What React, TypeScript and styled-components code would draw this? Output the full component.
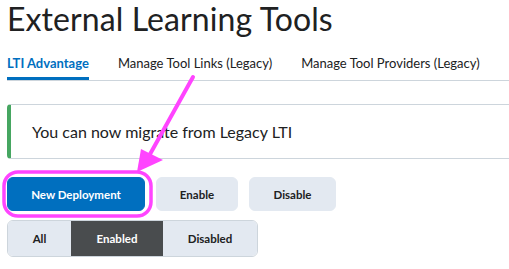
import React from 'react'
import styled, { createGlobalStyle } from 'styled-components'

const Global = createGlobalStyle`
  html, body { margin: 0; padding: 0; background: #ffffff; }
  body { font-family: Lato, "Open Sans", sans-serif; color: #202122; overflow: hidden; }
`

const Page = styled.div`
  position: relative;
  width: 509px;
  height: 269px;
  padding-left: 7px;
  box-sizing: border-box;
  overflow: hidden;
`

const Title = styled.h1`
  margin: 0;
  font-size: 32px;
  font-weight: 400;
  line-height: 38px;
  color: #202122;
  letter-spacing: 0.1px;
`

const TabBar = styled.div`
  display: flex;
  gap: 29px;
  margin-top: 10px;
  border-bottom: 1px solid #cdd5dc;
`

const Tab = styled.div<{ $active?: boolean }>`
  font-size: 13px;
  line-height: 16px;
  padding: 7px 0 9px;
  font-weight: ${p => (p.$active ? 700 : 400)};
  color: ${p => (p.$active ? '#006fbf' : '#202122')};
  box-shadow: ${p => (p.$active ? 'inset 0 -3px 0 #006fbf' : 'none')};
`

const Alert = styled.div`
  margin-top: 23px;
  height: 53px;
  display: flex;
  align-items: center;
  padding-left: 21px;
  border: 1px solid #cdd5dc;
  border-left: 4px solid #46a661;
  border-right: none;
  border-radius: 4px 0 0 4px;
  font-size: 16px;
  color: #202122;
`

const ButtonRow = styled.div`
  display: flex;
  gap: 11px;
  margin-top: 18px;
`

const Button = styled.button<{ $primary?: boolean; $w: number }>`
  width: ${p => p.$w}px;
  height: 34px;
  border-radius: 6px;
  border: 1px solid ${p => (p.$primary ? '#006fbf' : '#e3e9f1')};
  background: ${p => (p.$primary ? '#006fbf' : '#e3e9f1')};
  color: ${p => (p.$primary ? '#ffffff' : '#202122')};
  font-family: Lato, sans-serif;
  font-size: 11.5px;
  font-weight: 700;
  padding: 0;
`

const Segmented = styled.div`
  display: inline-flex;
  margin-top: 9px;
  border: 1px solid #cdd5dc;
  border-radius: 6px;
  overflow: hidden;
  height: 35px;
`

const Segment = styled.div<{ $selected?: boolean; $w: number }>`
  width: ${p => p.$w}px;
  display: flex;
  align-items: center;
  justify-content: center;
  font-size: 11.5px;
  font-weight: 700;
  background: ${p => (p.$selected ? '#494c4e' : '#e3e9f1')};
  color: ${p => (p.$selected ? '#ffffff' : '#202122')};
`

const Annotation = styled.svg`
  position: absolute;
  left: 0;
  top: 0;
  pointer-events: none;
`

export default function App() {
  return (
    <Page>
      <Global />
      <Title>External Learning Tools</Title>
      <TabBar>
        <Tab $active>LTI Advantage</Tab>
        <Tab>Manage Tool Links (Legacy)</Tab>
        <Tab>Manage Tool Providers (Legacy)</Tab>
      </TabBar>
      <Alert>You can now migrate from Legacy LTI</Alert>
      <ButtonRow>
        <Button $primary $w={138}>New Deployment</Button>
        <Button $w={82}>Enable</Button>
        <Button $w={87}>Disable</Button>
      </ButtonRow>
      <Segmented>
        <Segment $w={63}>All</Segment>
        <Segment $selected $w={92}>Enabled</Segment>
        <Segment $w={94}>Disabled</Segment>
      </Segmented>
      <Annotation width="509" height="269" viewBox="0 0 509 269">
        <line x1="193" y1="77" x2="149" y2="156" stroke="#ff44ff" strokeWidth="4" strokeLinecap="round" />
        <polygon points="137,172 141,149 163,160" fill="#ff44ff" />
        <rect x="4" y="172" width="147" height="44" rx="14" fill="none" stroke="#ff44ff" strokeWidth="3.5" />
      </Annotation>
    </Page>
  )
}
